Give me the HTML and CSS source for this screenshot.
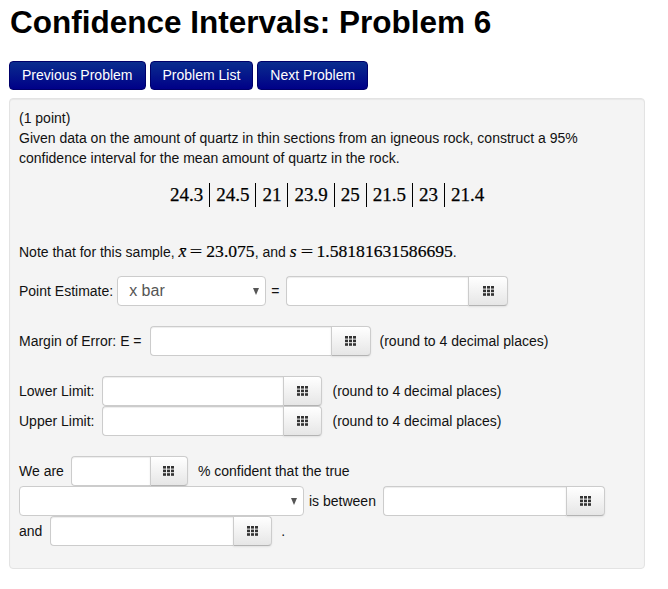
FILE: index.html
```html
<!DOCTYPE html>
<html>
<head>
<meta charset="utf-8">
<link rel="stylesheet" href="styles.css">
</head>
<body>
<div class="page">
  <h1 class="title">Confidence Intervals: Problem 6</h1>
  <div class="nav">
    <a class="navbtn">Previous Problem</a>
    <a class="navbtn">Problem List</a>
    <a class="navbtn">Next Problem</a>
  </div>
  <div class="panel">
    <div class="text">(1 point)<br>Given data on the amount of quartz in thin sections from an igneous rock, construct a 95% confidence interval for the mean amount of quartz in the rock.</div>
    <div class="datarow">
      <span class="cell first">24.3</span><span class="cell">24.5</span><span class="cell">21</span><span class="cell">23.9</span><span class="cell">25</span><span class="cell">21.5</span><span class="cell">23</span><span class="cell">21.4</span>
    </div>
    <div class="note">Note that for this sample, <span class="math"><span class="mi">x̄</span><span class="mo">=</span>23.075</span>, and <span class="math"><span class="mi">s</span><span class="mo">=</span>1.58181631586695</span>.</div>

    <div class="row r-point">
      <span>Point Estimate:</span>
      <div class="select w-point"><span class="sel-text">x bar</span><span class="caret"></span></div>
      <span class="eq">=</span>
      <div class="ig ml7"><div class="inp w182"></div><div class="gbtn"><svg width="11" height="10" viewBox="0 0 11 10"><g fill="#333"><rect x="0" y="0" width="3" height="2.6"/><rect x="4" y="0" width="3" height="2.6"/><rect x="8" y="0" width="3" height="2.6"/><rect x="0" y="3.6" width="3" height="2.6"/><rect x="4" y="3.6" width="3" height="2.6"/><rect x="8" y="3.6" width="3" height="2.6"/><rect x="0" y="7.2" width="3" height="2.6"/><rect x="4" y="7.2" width="3" height="2.6"/><rect x="8" y="7.2" width="3" height="2.6"/></g></svg></div></div>
    </div>

    <div class="row r-margin">
      <span>Margin of Error: E =</span>
      <div class="ig ml8"><div class="inp w181"></div><div class="gbtn"><svg width="11" height="10" viewBox="0 0 11 10"><g fill="#333"><rect x="0" y="0" width="3" height="2.6"/><rect x="4" y="0" width="3" height="2.6"/><rect x="8" y="0" width="3" height="2.6"/><rect x="0" y="3.6" width="3" height="2.6"/><rect x="4" y="3.6" width="3" height="2.6"/><rect x="8" y="3.6" width="3" height="2.6"/><rect x="0" y="7.2" width="3" height="2.6"/><rect x="4" y="7.2" width="3" height="2.6"/><rect x="8" y="7.2" width="3" height="2.6"/></g></svg></div></div>
      <span class="ml9">(round to 4 decimal places)</span>
    </div>

    <div class="row r-lower">
      <span>Lower Limit:</span>
      <div class="ig ml8"><div class="inp w181"></div><div class="gbtn w39"><svg width="11" height="10" viewBox="0 0 11 10"><g fill="#333"><rect x="0" y="0" width="3" height="2.6"/><rect x="4" y="0" width="3" height="2.6"/><rect x="8" y="0" width="3" height="2.6"/><rect x="0" y="3.6" width="3" height="2.6"/><rect x="4" y="3.6" width="3" height="2.6"/><rect x="8" y="3.6" width="3" height="2.6"/><rect x="0" y="7.2" width="3" height="2.6"/><rect x="4" y="7.2" width="3" height="2.6"/><rect x="8" y="7.2" width="3" height="2.6"/></g></svg></div></div>
      <span class="ml10">(round to 4 decimal places)</span>
    </div>
    <div class="row r-upper">
      <span>Upper Limit:</span>
      <div class="ig ml8"><div class="inp w181"></div><div class="gbtn w39"><svg width="11" height="10" viewBox="0 0 11 10"><g fill="#333"><rect x="0" y="0" width="3" height="2.6"/><rect x="4" y="0" width="3" height="2.6"/><rect x="8" y="0" width="3" height="2.6"/><rect x="0" y="3.6" width="3" height="2.6"/><rect x="4" y="3.6" width="3" height="2.6"/><rect x="8" y="3.6" width="3" height="2.6"/><rect x="0" y="7.2" width="3" height="2.6"/><rect x="4" y="7.2" width="3" height="2.6"/><rect x="8" y="7.2" width="3" height="2.6"/></g></svg></div></div>
      <span class="ml10">(round to 4 decimal places)</span>
    </div>

    <div class="row r-weare">
      <span>We are</span>
      <div class="ig ml7"><div class="inp w79"></div><div class="gbtn w38"><svg width="11" height="10" viewBox="0 0 11 10"><g fill="#333"><rect x="0" y="0" width="3" height="2.6"/><rect x="4" y="0" width="3" height="2.6"/><rect x="8" y="0" width="3" height="2.6"/><rect x="0" y="3.6" width="3" height="2.6"/><rect x="4" y="3.6" width="3" height="2.6"/><rect x="8" y="3.6" width="3" height="2.6"/><rect x="0" y="7.2" width="3" height="2.6"/><rect x="4" y="7.2" width="3" height="2.6"/><rect x="8" y="7.2" width="3" height="2.6"/></g></svg></div></div>
      <span class="ml10">% confident that the true</span>
    </div>
    <div class="row r-between">
      <div class="select w-true"><span class="sel-text"></span><span class="caret"></span></div>
      <span class="ml5">is between</span>
      <div class="ig ml7"><div class="inp w183"></div><div class="gbtn w39"><svg width="11" height="10" viewBox="0 0 11 10"><g fill="#333"><rect x="0" y="0" width="3" height="2.6"/><rect x="4" y="0" width="3" height="2.6"/><rect x="8" y="0" width="3" height="2.6"/><rect x="0" y="3.6" width="3" height="2.6"/><rect x="4" y="3.6" width="3" height="2.6"/><rect x="8" y="3.6" width="3" height="2.6"/><rect x="0" y="7.2" width="3" height="2.6"/><rect x="4" y="7.2" width="3" height="2.6"/><rect x="8" y="7.2" width="3" height="2.6"/></g></svg></div></div>
    </div>
    <div class="row r-and">
      <span>and</span>
      <div class="ig ml8"><div class="inp w183"></div><div class="gbtn w39"><svg width="11" height="10" viewBox="0 0 11 10"><g fill="#333"><rect x="0" y="0" width="3" height="2.6"/><rect x="4" y="0" width="3" height="2.6"/><rect x="8" y="0" width="3" height="2.6"/><rect x="0" y="3.6" width="3" height="2.6"/><rect x="4" y="3.6" width="3" height="2.6"/><rect x="8" y="3.6" width="3" height="2.6"/><rect x="0" y="7.2" width="3" height="2.6"/><rect x="4" y="7.2" width="3" height="2.6"/><rect x="8" y="7.2" width="3" height="2.6"/></g></svg></div></div>
      <span class="ml9">.</span>
    </div>
  </div>
</div>
</body>
</html>
```

FILE: styles.css
```css
* { box-sizing: border-box; }
html, body { margin: 0; padding: 0; background: #fff; }
body {
  font-family: "Liberation Sans", Arial, sans-serif;
  font-size: 14px;
  line-height: 20px;
  color: #333;
}
.page { padding-left: 9px; }
.title {
  margin: 2px 0 19px 1px;
  font-size: 31.5px;
  line-height: 40px;
  font-weight: bold;
  color: #000;
}
.nav { display: flex; gap: 4px; }
.navbtn {
  display: block;
  height: 29px;
  padding: 4px 12px;
  line-height: 19px;
  font-size: 14px;
  color: #fff;
  border: 1px solid #00006a;
  border-radius: 4px;
  background: linear-gradient(#0a2d8e, #000088);
}
.panel {
  margin-top: 8px;
  width: 636px;
  padding: 9px 9px 22px 9px;
  background: #f4f4f4;
  border: 1px solid #e3e3e3;
  border-radius: 4px;
  box-shadow: inset 0 1px 1px rgba(0,0,0,0.05);
  color: #111;
}
.text { width: 570px; }
.datarow {
  margin-top: 15px;
  display: flex;
  justify-content: center;
  font-family: "Liberation Serif", "Times New Roman", serif;
  font-size: 19px;
  color: #000;
  -webkit-text-stroke: 0.25px #000;
}
.cell {
  padding: 0 6px;
  height: 24px;
  line-height: 24px;
  border-left: 1px solid #000;
}
.cell.first { border-left: none; }
.note { margin-top: 34px; }
.math {
  font-family: "Liberation Serif", "Times New Roman", serif;
  font-size: 17.6px;
  color: #000;
  -webkit-text-stroke: 0.2px #000;
}
.mi { font-style: italic; }
.mo { display: inline-block; margin: 0 5px 0 5px; transform: scaleX(1.25); }
.row {
  display: flex;
  align-items: center;
  height: 30px;
}
.r-point { margin-top: 14px; }
.r-margin { margin-top: 20px; }
.r-lower { margin-top: 20px; }
.r-upper { margin-top: 0; }
.r-weare { margin-top: 20px; }
.select {
  height: 30px;
  background: #fff;
  border: 1px solid #ccc;
  border-radius: 4px;
  display: flex;
  align-items: center;
  justify-content: space-between;
  padding: 0 6px 0 11px;
}
.w-point { width: 149px; margin-left: 4px; }
.w-true { width: 285px; }
.sel-text { font-size: 16px; color: #555; }
.caret {
  width: 0; height: 0;
  border-left: 3.5px solid transparent;
  border-right: 3.5px solid transparent;
  border-top: 7px solid #555;
}
.eq { margin-left: 5px; }
.ig { display: flex; height: 30px; }
.inp {
  height: 30px;
  background: #fff;
  border: 1px solid #ccc;
  border-right: none;
  border-radius: 4px 0 0 4px;
  box-shadow: inset 0 1px 1px rgba(0,0,0,0.075);
}
.w182 { width: 182px; }
.w181 { width: 181px; }
.w183 { width: 183px; }
.w79 { width: 79px; }
.gbtn {
  width: 40px;
  height: 30px;
  display: flex;
  align-items: center;
  justify-content: center;
  border: 1px solid #ccc;
  border-bottom-color: #b3b3b3;
  border-radius: 0 4px 4px 0;
  background: linear-gradient(#ffffff, #e6e6e6);
  box-shadow: 0 1px 2px rgba(0,0,0,0.08);
}
.gbtn.w38 { width: 38px; }
.gbtn.w39 { width: 39px; }
.ml5 { margin-left: 5px; }
.ml7 { margin-left: 7px; }
.ml8 { margin-left: 8px; }
.ml9 { margin-left: 9px; }
.ml10 { margin-left: 10px; }
```
